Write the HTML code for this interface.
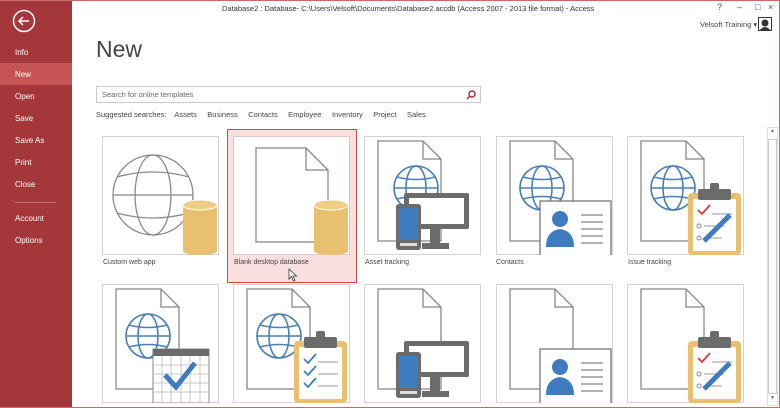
<!DOCTYPE html>
<html><head><meta charset="utf-8"><style>
*{margin:0;padding:0;box-sizing:border-box}
body{width:780px;height:408px;overflow:hidden;background:#fff;font-family:"Liberation Sans",sans-serif;position:relative}
#side{position:absolute;left:0;top:0;width:72px;height:408px;background:#a4373a;color:#fff;font-size:8px}
#side div.it{position:absolute;left:15px}
#new{position:absolute;left:0;top:63px;width:72px;height:22px;background:#c75454}
.t{position:absolute;font-size:7.5px;color:#444;white-space:nowrap}
.tile{position:absolute;width:117px;height:119px;border:1px solid #d4d4d4;background:#fff}
.lab{position:absolute;font-size:7px;color:#444}
#frame{position:absolute;left:0;right:0;top:0;bottom:0;border:1px solid #c96a6a;border-left:none;pointer-events:none}
.wc{position:absolute;top:2px;font-size:9px;color:#555;white-space:nowrap}
</style></head><body>
<svg width="0" height="0" style="position:absolute"><defs>
<g id="page"><path d="M13 4H58L76 22V104H13Z M58 4V22H76" fill="#fff" stroke="#888" stroke-width="1.3"/></g>
<g id="globe" fill="none" stroke="#4a7fb5" stroke-width="1.6"><circle cx="0" cy="0" r="22"/><ellipse cx="0" cy="0" rx="10" ry="22"/><path d="M-22 0H22M-19 -11Q0 -6 19 -11M-19 11Q0 6 19 11"/></g>
<g id="dev"><rect x="39" y="56" width="65" height="36" rx="2" fill="#6b6b6b"/><rect x="44" y="61" width="55" height="26" fill="#fff"/><rect x="65" y="92" width="10" height="14" fill="#6b6b6b"/><rect x="57" y="106" width="27" height="6" fill="#6b6b6b"/><rect x="31" y="67" width="25" height="46" rx="3" fill="#6b6b6b"/><rect x="34" y="71" width="19" height="32" fill="#3f7cbf"/><rect x="35" y="106" width="17" height="3" fill="#ddd"/></g>
<g id="card"><rect x="43" y="64" width="71" height="55" fill="#fff" stroke="#777" stroke-width="1.3"/><circle cx="63" cy="82" r="8" fill="#3f7cbf"/><path d="M49 110Q49 94 63 92Q77 94 77 110Z" fill="#3f7cbf"/><path d="M84 78H106M84 85H106M84 92H106M84 99H106M84 106H106" stroke="#888" stroke-width="1.3"/></g>
<g id="clip"><rect x="60" y="56" width="53" height="62" rx="4" fill="#e8c06f"/><rect x="65" y="62" width="43" height="52" fill="#fff"/><rect x="70" y="52" width="33" height="11" rx="2" fill="#6b6b6b"/><rect x="82" y="46" width="9" height="8" rx="2" fill="#6b6b6b"/></g>
<g id="cyl"><rect x="80" y="68" width="34" height="46" fill="#e8c06f"/><ellipse cx="97" cy="114" rx="17" ry="4" fill="#e8c06f"/><ellipse cx="97" cy="68" rx="17" ry="5" fill="#f0cd86" stroke="#fff" stroke-width="1"/></g>
</defs></svg>
<div id="side"><div id="new"></div>
<svg style="position:absolute;left:12px;top:9px" width="24" height="24"><circle cx="12" cy="12" r="10.5" fill="none" stroke="#fff" stroke-width="1.5"/><path d="M17 12H7M11 8L7 12L11 16" fill="none" stroke="#fff" stroke-width="1.5"/></svg>
<div class="it" style="top:48px">Info</div><div class="it" style="top:70px">New</div><div class="it" style="top:92px">Open</div><div class="it" style="top:114px">Save</div><div class="it" style="top:136px">Save As</div><div class="it" style="top:158px">Print</div><div class="it" style="top:180px">Close</div>
<div style="position:absolute;left:15px;top:202px;width:41px;height:1px;background:#c46a6a"></div>
<div class="it" style="top:214px">Account</div><div class="it" style="top:236px">Options</div></div>
<div class="t" style="left:222px;top:4px;color:#333">Database2 : Database- C:\Users\Velsoft\Documents\Database2.accdb (Access 2007 - 2013 file format) - Access</div>
<div class="wc" style="left:717px">?</div><div class="wc" style="left:737px">–</div><div class="wc" style="left:755px">□</div><div class="wc" style="left:768px">×</div>
<div class="t" style="left:700px;top:20px">Velsoft Training ▾</div>
<svg style="position:absolute;left:758px;top:17px" width="14" height="14"><rect x="0.5" y="0.5" width="13" height="13" fill="#fff" stroke="#333"/><circle cx="7" cy="6" r="3.5" fill="#333"/><path d="M1 14Q7 6 13 14Z" fill="#333"/></svg>
<div style="position:absolute;left:96px;top:36px;font-size:23px;color:#444;font-weight:300">New</div>
<div style="position:absolute;left:96px;top:86px;width:385px;height:17px;border:1px solid #ccc"><span class="t" style="left:5px;top:3px;color:#666">Search for online templates</span><svg style="position:absolute;right:4px;top:3px" width="10" height="10"><circle cx="6" cy="4" r="3" fill="none" stroke="#a4373a" stroke-width="1.5"/><path d="M4 6L1 9" stroke="#a4373a" stroke-width="1.5"/></svg></div>
<div class="t" style="left:96px;top:110px">Suggested searches:&nbsp;&nbsp;&nbsp; Assets &nbsp;&nbsp;&nbsp; Business &nbsp;&nbsp;&nbsp; Contacts &nbsp;&nbsp;&nbsp; Employee &nbsp;&nbsp;&nbsp; Inventory &nbsp;&nbsp;&nbsp; Project &nbsp;&nbsp;&nbsp; Sales</div>
<div style="position:absolute;left:227px;top:129px;width:130px;height:154px;border:1.5px solid #e0453a;background:#f9dfe0"></div>
<div class="tile" style="left:102px;top:136px"><svg width="116" height="118"><g fill="none" stroke="#888" stroke-width="1.3"><circle cx="50" cy="58" r="40"/><ellipse cx="50" cy="58" rx="18" ry="40"/><path d="M10 58H90M14 40Q50 30 86 40M14 76Q50 86 86 76"/></g><use href="#cyl"/></svg></div>
<div class="tile" style="left:233px;top:136px;border-color:#d8c8c8"><svg width="116" height="118"><path d="M22 11H72L94 33V105H22Z M72 11V33H94" fill="#fff" stroke="#888" stroke-width="1.3"/><use href="#cyl"/></svg></div>
<div class="tile" style="left:364px;top:136px"><svg width="116" height="118"><use href="#page"/><use href="#globe" x="51" y="51"/><use href="#dev"/></svg></div>
<div class="tile" style="left:496px;top:136px"><svg width="116" height="118"><use href="#page"/><use href="#globe" x="45" y="51"/><use href="#card"/></svg></div>
<div class="tile" style="left:627px;top:136px"><svg width="116" height="118"><use href="#page"/><use href="#globe" x="45" y="51"/><use href="#clip"/><path d="M70 73L74 77L82 68" fill="none" stroke="#c9403a" stroke-width="1.8"/><path d="M84 77H104M76 89H96M76 101H94" stroke="#999" stroke-width="1"/><circle cx="71" cy="89" r="2" fill="none" stroke="#888"/><circle cx="71" cy="101" r="2" fill="none" stroke="#888"/><path d="M76 104L102 78" stroke="#3f7cbf" stroke-width="5"/></svg></div>
<div class="lab" style="left:103px;top:259px">Custom web app</div>
<div class="lab" style="left:234px;top:259px">Blank desktop database</div>
<div class="lab" style="left:365px;top:259px">Asset tracking</div>
<div class="lab" style="left:496px;top:259px">Contacts</div>
<div class="lab" style="left:628px;top:259px">Issue tracking</div>
<svg style="position:absolute;left:288px;top:268px" width="10" height="14"><path d="M1 1V11L3.5 8.5L5.5 13L7 12.3L5 8H8.5Z" fill="#fff" stroke="#333" stroke-width="0.8"/></svg>
<div class="tile" style="left:102px;top:284px"><svg width="116" height="118"><use href="#page"/><use href="#globe" x="45" y="51"/><rect x="50" y="64" width="56" height="54" fill="#fff" stroke="#888"/><rect x="50" y="64" width="56" height="7" fill="#6b6b6b"/><path d="M50 80H106M50 89H106M50 98H106M50 107H106M59 71V118M68 71V118M78 71V118M87 71V118M97 71V118" stroke="#bbb" stroke-width="0.8"/><path d="M62 90L73 102L92 78" fill="none" stroke="#3f7cbf" stroke-width="5"/></svg></div>
<div class="tile" style="left:233px;top:284px"><svg width="116" height="118"><use href="#page"/><use href="#globe" x="45" y="51"/><use href="#clip"/><path d="M70 74L74 78L82 69M70 86L74 90L82 81M70 98L74 102L82 93" fill="none" stroke="#3f7cbf" stroke-width="1.8"/><path d="M84 77H104M84 89H104M84 101H104" stroke="#999"/></svg></div>
<div class="tile" style="left:364px;top:284px"><svg width="116" height="118"><use href="#page"/><use href="#dev"/></svg></div>
<div class="tile" style="left:496px;top:284px"><svg width="116" height="118"><use href="#page"/><use href="#card"/></svg></div>
<div class="tile" style="left:627px;top:284px"><svg width="116" height="118"><use href="#page"/><use href="#clip"/><path d="M70 73L74 77L82 68" fill="none" stroke="#c9403a" stroke-width="1.8"/><path d="M84 77H104M76 89H96M76 101H94" stroke="#999"/><circle cx="71" cy="89" r="2" fill="none" stroke="#888"/><circle cx="71" cy="101" r="2" fill="none" stroke="#888"/><path d="M76 104L102 78" stroke="#3f7cbf" stroke-width="5"/></svg></div>
<div style="position:absolute;left:767px;top:127px;width:11px;height:279px;border:1px solid #ddd;background:#fff"><div style="position:absolute;left:0;top:0;width:9px;height:10px;font-size:5px;color:#666;text-align:center">▲</div><div style="position:absolute;left:0;top:11px;width:9px;height:255px;border:1px solid #ccc;background:#fff"></div><div style="position:absolute;left:0;bottom:0;width:9px;height:10px;font-size:5px;color:#666;text-align:center">▼</div></div>
<div id="frame"></div>
</body></html>
